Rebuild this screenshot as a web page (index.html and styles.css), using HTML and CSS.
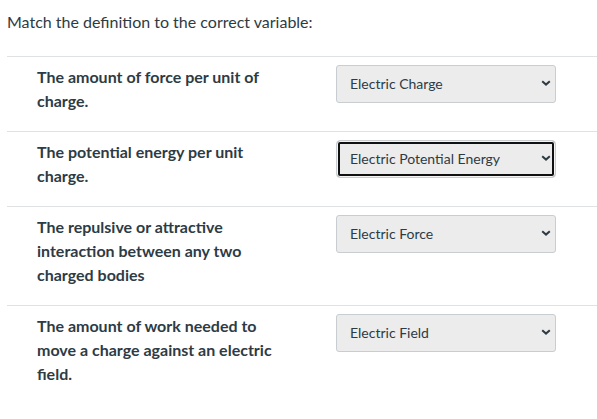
FILE: index.html
```html
<!DOCTYPE html>
<html>
<head>
<meta charset="utf-8">
<link rel="stylesheet" href="styles.css">
</head>
<body>
<div class="quiz">
  <p class="prompt">Match the definition to the correct variable:</p>
  <div class="answers">
    <div class="row">
      <div class="label">The amount of force per unit of charge.</div>
      <div class="select-wrap">
        <select class="choice"><option>Electric Charge</option></select>
        <svg class="chev" viewBox="0 0 10 6" width="10" height="6"><path d="M1.2 1.2 L5 4.6 L8.8 1.2" fill="none" stroke="#2d3b45" stroke-width="2"/></svg>
      </div>
    </div>
    <div class="row">
      <div class="label">The potential energy per unit charge.</div>
      <div class="select-wrap">
        <select class="choice focused"><option>Electric Potential Energy</option></select>
        <svg class="chev" viewBox="0 0 10 6" width="10" height="6"><path d="M1.2 1.2 L5 4.6 L8.8 1.2" fill="none" stroke="#2d3b45" stroke-width="2"/></svg>
      </div>
    </div>
    <div class="row">
      <div class="label">The repulsive or attractive interaction between any two charged bodies</div>
      <div class="select-wrap">
        <select class="choice"><option>Electric Force</option></select>
        <svg class="chev" viewBox="0 0 10 6" width="10" height="6"><path d="M1.2 1.2 L5 4.6 L8.8 1.2" fill="none" stroke="#2d3b45" stroke-width="2"/></svg>
      </div>
    </div>
    <div class="row">
      <div class="label">The amount of work needed to move a charge against an electric field.</div>
      <div class="select-wrap">
        <select class="choice"><option>Electric Field</option></select>
        <svg class="chev" viewBox="0 0 10 6" width="10" height="6"><path d="M1.2 1.2 L5 4.6 L8.8 1.2" fill="none" stroke="#2d3b45" stroke-width="2"/></svg>
      </div>
    </div>
  </div>
</div>
</body>
</html>
```

FILE: styles.css
```css
html, body {
  margin: 0;
  padding: 0;
  background: #ffffff;
}
body {
  font-family: Lato, "Noto Sans", sans-serif;
  color: #2d3b45;
}
.quiz {
  padding: 0 0 0 7px;
}
.prompt {
  margin: 0;
  padding: 12px 0 0 0;
  height: 44px;
  font-size: 16px;
  line-height: 20px;
}
.answers {
  border-top: 1px solid #dfe1e3;
}
.row {
  display: grid;
  grid-template-columns: 240px 220px;
  column-gap: 59px;
  align-items: start;
  padding: 8px 0 18px 30px;
  border-bottom: 1px solid #dfe1e3;
}
.row:last-child {
  border-bottom: none;
}
.label {
  font-size: 16px;
  font-weight: bold;
  line-height: 24px;
}
.select-wrap {
  position: relative;
}
.choice {
  appearance: none;
  -webkit-appearance: none;
  display: block;
  width: 220px;
  height: 38px;
  margin: 0;
  padding: 0 24px 2px 13px;
  background: #ececec;
  border: 1px solid #c7cdd1;
  border-radius: 3px;
  font-family: Lato, "Noto Sans", sans-serif;
  font-size: 14px;
  color: #2d3b45;
}
.choice.focused {
  border-radius: 4px;
  box-shadow: inset 0 0 0 1px #f4f4f4, inset 0 0 0 3px #111;
}
.chev {
  position: absolute;
  right: 5px;
  top: 15px;
}
```
